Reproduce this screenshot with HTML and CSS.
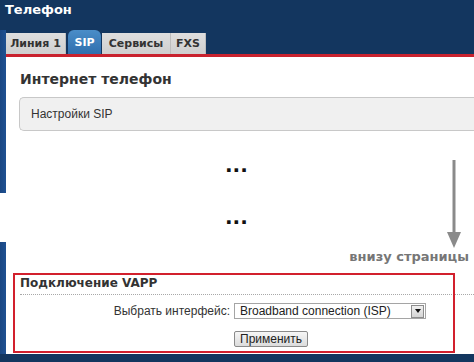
FILE: index.html
```html
<!DOCTYPE html>
<html lang="ru">
<head>
    <meta charset="UTF-8">
    <meta name="viewport" content="width=device-width, initial-scale=1.0">
    <title>Телефон</title>
    <link rel="stylesheet" href="styles.css">
</head>
<body>

<div class="title">Телефон</div>
<div class="frame">
    <div class="edge"><span class="gap"></span></div>
    <div class="main">
        <div class="tabs">
            <span class="tab tab-line">Линия 1</span>
            <span class="tab active">SIP</span>
            <span class="tab tab-serv">Сервисы</span>
            <span class="tab tab-fxs">FXS</span>
        </div>
        <div class="panel">
            <h2>Интернет телефон</h2>
            <div class="sip-box">Настройки SIP</div>

            <div class="middle">
                <div class="dots">
                    <span>...</span>
                    <span>...</span>
                </div>
                <div class="note">
                    <svg class="arrow" width="14" height="88" viewBox="0 0 14 88">
                        <line x1="7" y1="0" x2="7" y2="74" stroke="#8a8a8a" stroke-width="3"/>
                        <polygon points="0,72 14,72 7,88" fill="#8a8a8a"/>
                    </svg>
                    <span class="note-text">внизу страницы</span>
                </div>
            </div>

            <div class="vapp">
                <h3>Подключение VAPP</h3>
                <div class="row">
                    <label>Выбрать интерфейс:</label>
                    <div class="select">
                        <span>Broadband connection (ISP)</span>
                        <span class="caret"></span>
                    </div>
                </div>
                <div class="actions">
                    <button type="button">Применить</button>
                </div>
                <div class="mark"></div>
            </div>
        </div>
    </div>
</div>

</body>
</html>
```

FILE: styles.css
```css
body {
    margin: 0;
    background-color: #13365f;
    font-family: "Liberation Sans", Arial, sans-serif;
    color: #333;
}
.title {
    height: 30px;
    box-sizing: border-box;
    padding: 2px 5px 0;
    font: bold 13px/16px "DejaVu Sans", sans-serif;
    color: #fff;
}
.frame {
    display: flex;
}
.edge {
    width: 6px;
    flex-shrink: 0;
    display: flex;
    flex-direction: column;
    background: linear-gradient(to right, #1a4782, #1f5192);
}
.gap {
    display: block;
    height: 49px;
    margin-top: 163px;
    background: #fff;
}
.main {
    flex: 1;
}
.tabs {
    display: flex;
    align-items: flex-end;
    height: 24px;
}
.tab {
    height: 21px;
    box-sizing: border-box;
    padding-top: 4px;
    text-align: center;
    font: bold 11px/13px "DejaVu Sans", sans-serif;
    color: #333;
    background: linear-gradient(#dedede, #cfcfcf);
    border-right: 1px solid #bdbdbd;
}
.tab-line {
    width: 60px;
    margin-right: 2px;
}
.tab-serv {
    width: 69px;
}
.tab-fxs {
    width: 35px;
}
.tab.active {
    width: 33px;
    height: 24px;
    padding-top: 6px;
    margin-right: 1px;
    color: #fff;
    border-right: none;
    border-radius: 6px 6px 0 0;
    background: linear-gradient(#4a8dc8, #2f6fae);
}
.panel {
    height: 300px;
    box-sizing: border-box;
    background: #fff;
    border-top: 3px solid #c9222e;
}
.panel h2 {
    margin: 0;
    padding: 14px 0 0 14px;
    font: bold 14px/17px "DejaVu Sans", sans-serif;
    color: #333;
}
.sip-box {
    margin: 9px 0 0 13px;
    height: 32px;
    padding-left: 11px;
    font-size: 12px;
    line-height: 32px;
    color: #333;
    background: #f0f0f0;
    border: 1px solid #c8c8c8;
    border-right: none;
    border-radius: 5px 0 0 5px;
}
.middle {
    display: flex;
    height: 143px;
}
.dots {
    display: flex;
    flex-direction: column;
    gap: 32px;
    padding: 24px 0 0 219px;
    font: bold 20px/20px "DejaVu Sans", sans-serif;
    color: #111;
}
.note {
    margin-left: auto;
    padding-right: 5px;
    display: flex;
    flex-direction: column;
    align-items: flex-end;
}
.arrow {
    margin: 29px 8px 0 0;
}
.note-text {
    margin-top: 2px;
    font: bold 13px/14px "DejaVu Sans", sans-serif;
    color: #767676;
}
.vapp {
    position: relative;
}
.vapp h3 {
    margin: 0 0 0 14px;
    padding: 2px 0 3px;
    font: bold 12px/15px "DejaVu Sans", sans-serif;
    color: #333;
    border-bottom: 1px dotted #a8a8a8;
}
.row {
    display: flex;
    align-items: center;
    gap: 4px;
    margin-top: 8px;
    font-size: 12px;
}
.row label {
    width: 224px;
    text-align: right;
    color: #333;
}
.select {
    width: 192px;
    height: 16px;
    box-sizing: border-box;
    display: flex;
    align-items: center;
    justify-content: space-between;
    padding-left: 5px;
    border: 1px solid #a5a5a5;
    font-size: 12px;
    line-height: 14px;
    color: #222;
}
.caret {
    width: 13px;
    height: 13px;
    box-sizing: border-box;
    margin-right: 1px;
    display: flex;
    align-items: center;
    justify-content: center;
    background: linear-gradient(#f0f0f0, #d4d4d4);
    border: 1px solid #8c8c8c;
}
.caret::after {
    content: "";
    border-left: 3px solid transparent;
    border-right: 3px solid transparent;
    border-top: 4px solid #111;
}
.actions {
    margin-top: 10px;
    padding-left: 228px;
}
button {
    height: 16px;
    padding: 0 5px;
    font: 12px/14px "Liberation Sans", Arial, sans-serif;
    color: #222;
    background: linear-gradient(#f6f6f6, #dcdcdc);
    border: 1px solid #8a8a8a;
    border-radius: 2px;
}
.mark {
    position: absolute;
    left: 7px;
    top: -1px;
    width: 442px;
    height: 80px;
    box-sizing: border-box;
    border: 2px solid #d2202d;
}
```
